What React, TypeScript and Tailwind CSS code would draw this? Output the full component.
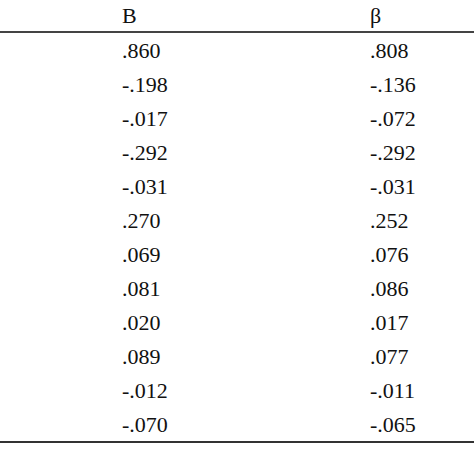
const rows: [string, string][] = [
  ['.860', '.808'],
  ['-.198', '-.136'],
  ['-.017', '-.072'],
  ['-.292', '-.292'],
  ['-.031', '-.031'],
  ['.270', '.252'],
  ['.069', '.076'],
  ['.081', '.086'],
  ['.020', '.017'],
  ['.089', '.077'],
  ['-.012', '-.011'],
  ['-.070', '-.065'],
]

export default function App() {
  return (
    <div
      className="w-[474px] h-[474px] bg-white text-[#111] text-[22px]"
      style={{ fontFamily: '"Liberation Serif", "Times New Roman", serif' }}
    >
      {/* header */}
      <div className="flex h-[33px] items-center pl-[122px] border-b-2 border-[#444]">
        <span className="w-[248px]">B</span>
        <span>β</span>
      </div>

      {/* body */}
      <div className="border-b-2 border-[#333]">
        {rows.map(([b, beta], i) => (
          <div key={i} className="flex h-[34px] items-center pl-[122px]">
            <span className="w-[248px]">{b}</span>
            <span>{beta}</span>
          </div>
        ))}
      </div>
    </div>
  )
}
